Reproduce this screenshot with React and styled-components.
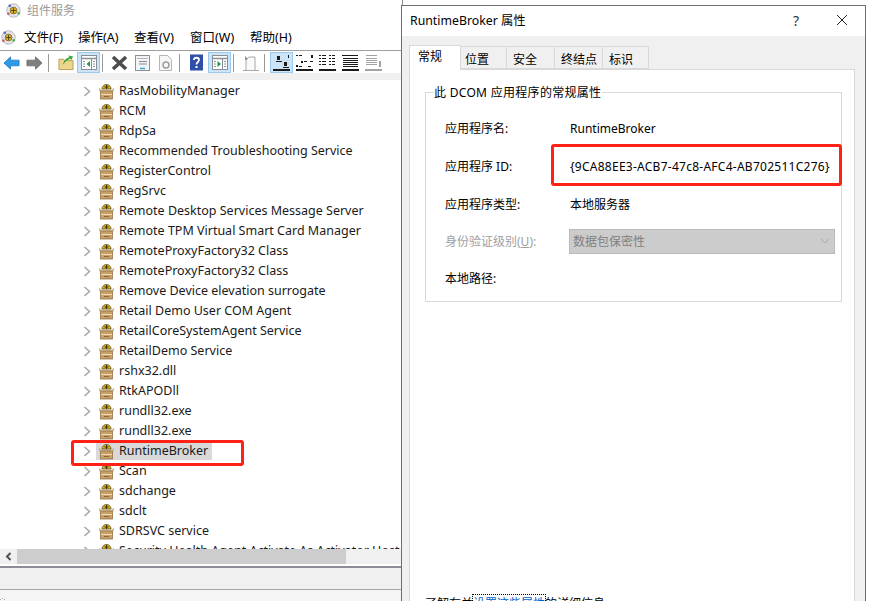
import React from "react";
import styled, { createGlobalStyle } from "styled-components";

const UI_FONT = `"Noto Sans", "Noto Sans CJK SC", sans-serif`;

const services = [
  "RasMobilityManager",
  "RCM",
  "RdpSa",
  "Recommended Troubleshooting Service",
  "RegisterControl",
  "RegSrvc",
  "Remote Desktop Services Message Server",
  "Remote TPM Virtual Smart Card Manager",
  "RemoteProxyFactory32 Class",
  "RemoteProxyFactory32 Class",
  "Remove Device elevation surrogate",
  "Retail Demo User COM Agent",
  "RetailCoreSystemAgent Service",
  "RetailDemo Service",
  "rshx32.dll",
  "RtkAPODll",
  "rundll32.exe",
  "rundll32.exe",
  "RuntimeBroker",
  "Scan",
  "sdchange",
  "sdclt",
  "SDRSVC service",
  "Security Health Agent Activate As Activator Host",
];

const menus = [
  { text: "文件(F)", w: 54 },
  { text: "操作(A)", w: 56 },
  { text: "查看(V)", w: 56 },
  { text: "窗口(W)", w: 60 },
  { text: "帮助(H)", w: 50 },
];

const tabs = [
  { text: "常规", w: 52, pad: 8 },
  { text: "位置", w: 46, pad: 4 },
  { text: "安全", w: 48, pad: 6 },
  { text: "终结点", w: 48, pad: 6 },
  { text: "标识", w: 46, pad: 6 },
];

const GlobalStyle = createGlobalStyle`
  html, body {
    margin: 0;
    height: 100%;
    background: #fff;
    overflow: hidden;
  }
  body {
    font-family: ${UI_FONT};
    font-size: 12.5px;
    color: #000;
  }
`;

const Desktop = styled.div`
  position: relative;
  width: 870px;
  height: 601px;
  overflow: hidden;
  background: #fff;
`;

const MainWindow = styled.div`
  display: flex;
  flex-direction: column;
  width: 402px;
  height: 601px;
  border-right: 1px solid #8a8a8a;
`;

const TitleBar = styled.div`
  display: flex;
  align-items: center;
  gap: 6px;
  box-sizing: border-box;
  height: 23px;
  padding: 0 0 3px 6px;
  font-size: 12px;
  color: #9a9a9a;
`;

const MenuBar = styled.div`
  display: flex;
  align-items: center;
  box-sizing: border-box;
  height: 27px;
  padding: 2px 0 0 1px;
`;

const MenuItem = styled.span`
  width: ${(p) => p.$w}px;
  font-size: 12.5px;
  line-height: 25px;
`;

const Toolbar = styled.div`
  display: flex;
  align-items: center;
  height: 21px;
  padding-top: 1px;
  border-top: 1px solid #a0a0a0;
`;

const ToolButton = styled.span`
  display: flex;
  align-items: center;
  justify-content: center;
  box-sizing: border-box;
  width: 23px;
  height: 21px;
  background: ${(p) => (p.$on ? "#cce4f7" : "transparent")};
  border: 1px solid ${(p) => (p.$on ? "#99c9ef" : "transparent")};
`;

const ToolSep = styled.span`
  width: 1px;
  height: 18px;
  margin: 0 5px 0 2px;
  background: #9a9a9a;
`;

const Band = styled.div`
  height: 7px;
  background: #f0f0f0;
`;

const Tree = styled.div`
  flex: 1;
  min-height: 0;
  overflow: hidden;
  padding-top: 1px;
`;

const Row = styled.div`
  display: flex;
  align-items: center;
  height: 20px;
  padding-left: 83px;
`;

const Chevron = styled.svg`
  flex: none;
  width: 8px;
  height: 11px;
  margin-right: 5px;
`;

const RowBody = styled.span`
  display: flex;
  align-items: center;
  height: 18px;
  padding-left: 3px;
  background: ${(p) => (p.$selected ? "#d9d9d9" : "transparent")};
`;

const Label = styled.span`
  margin-left: 5px;
  padding-right: 4px;
  font-size: 12.5px;
  line-height: 18px;
  white-space: nowrap;
  color: #1a1a1a;
`;

const HScroll = styled.div`
  display: flex;
  flex: none;
  height: 15px;
  margin-bottom: 2px;
  background: #f0f0f0;
`;

const ScrollArrow = styled.span`
  display: flex;
  align-items: center;
  justify-content: center;
  width: 17px;
`;

const HThumb = styled.div`
  width: 329px;
  background: #cdcdcd;
`;

const StatusBar = styled.div`
  flex: none;
  box-sizing: border-box;
  height: 24px;
  background: #f0f0f0;
  border-top: 2px solid #8c8c98;
  border-bottom: 1px solid #a8a8a8;
`;

const FootBand = styled.div`
  flex: none;
  height: 10px;
  padding-top: 1px;
  background: #f5f5f5;
`;

const Dialog = styled.div`
  position: absolute;
  left: 401px;
  top: 5px;
  display: flex;
  flex-direction: column;
  box-sizing: border-box;
  width: 465px;
  height: 600px;
  border: 1px solid #6f6f6f;
  background: #f0f0f0;
`;

const DialogTitle = styled.div`
  display: flex;
  align-items: center;
  justify-content: space-between;
  box-sizing: border-box;
  height: 30px;
  padding: 0 0 2px 8px;
  background: #fff;
  font-size: 12.3px;
`;

const TitleButtons = styled.div`
  display: flex;
  align-items: center;
`;

const HelpMark = styled.span`
  width: 46px;
  padding-left: 1px;
  font-size: 14px;
  text-align: center;
  color: #333;
`;

const CloseButton = styled.span`
  display: flex;
  justify-content: center;
  width: 46px;
`;

const TabStrip = styled.div`
  display: flex;
  align-items: flex-end;
  height: 33px;
  padding-left: 7px;
`;

const Tab = styled.div`
  position: relative;
  z-index: ${(p) => (p.$active ? 1 : 0)};
  box-sizing: border-box;
  width: ${(p) => p.$w}px;
  height: ${(p) => (p.$active ? 25 : 23)}px;
  margin-bottom: ${(p) => (p.$active ? -1 : 0)}px;
  padding: ${(p) => (p.$active ? 0 : 2)}px 0 0 ${(p) => p.$pad}px;
  border: 1px solid #d9d9d9;
  border-left-width: ${(p) => (p.$active ? 1 : 0)}px;
  border-bottom-width: ${(p) => (p.$active ? 0 : 1)}px;
  background: ${(p) => (p.$active ? "#fff" : "#f0f0f0")};
  font-size: 12px;
  line-height: 21px;
`;

const TabPanel = styled.div`
  flex: 1;
  margin: 0 10px 0 7px;
  padding: 14px 12px 0 15px;
  background: #fff;
  border: 1px solid #d9d9d9;
  border-bottom: 0;
`;

const GroupBox = styled.fieldset`
  box-sizing: border-box;
  height: 218px;
  margin: 0;
  padding: 9px 0 0 19px;
  border: 1px solid #d9d9d9;
`;

const GroupTitle = styled.legend`
  margin-left: -11px;
  padding: 2px 1px 0 0;
  font-size: 12px;
  line-height: 14px;
  letter-spacing: 0.3px;
`;

const Field = styled.div`
  display: grid;
  grid-template-columns: 125px auto;
  align-items: center;
  height: ${(p) => p.$h || 38}px;
  font-size: 12px;
  color: ${(p) => (p.$disabled ? "#a0a0a0" : "#000")};
`;

const GuidValue = styled.span`
  letter-spacing: 0.26px;
  white-space: nowrap;
`;

const ComboBox = styled.div`
  display: flex;
  align-items: center;
  justify-content: space-between;
  box-sizing: border-box;
  width: 266px;
  height: 25px;
  margin-left: -1px;
  padding: 0 4px 0 3px;
  background: #cccccc;
  border: 1px solid #bababa;
  color: #808080;
`;

const FootNote = styled.div`
  position: absolute;
  left: 23px;
  top: 591px;
  font-size: 12px;
  line-height: 14px;
  white-space: nowrap;
`;

const HelpLink = styled.span`
  color: #0066cc;
  outline: 1px dotted #000;
`;

const Callout = styled.div`
  position: absolute;
  left: ${(p) => p.$x}px;
  top: ${(p) => p.$y}px;
  box-sizing: border-box;
  width: ${(p) => p.$w}px;
  height: ${(p) => p.$h}px;
  border: 3px solid #ff2116;
  border-radius: 3px;
`;

// component-services package icon used for each tree row
const PackageIcon = () => (
  <svg width="15" height="18" viewBox="0 0 15 18">
    <path d="M3 7a4.5 4.5 0 0 1 9 0z" fill="#e3b520" stroke="#5a4a10" strokeWidth="0.8" />
    <path d="M7.5 3v4M5.5 5h4" stroke="#3b3210" strokeWidth="1" />
    <path d="M0 6.5l3.5 2h8l3.5-2-1 3H1z" fill="#e8d4ae" stroke="#b69a6d" strokeWidth="0.6" />
    <rect x="1.5" y="9" width="12" height="8" fill="#c99f68" stroke="#96734a" strokeWidth="0.8" />
    <path d="M2 12.5h11" stroke="#f0d9b4" strokeWidth="1" />
    <path d="M5 14.5h5" stroke="#8a6538" strokeWidth="1" />
  </svg>
);

const AppIcon = () => (
  <svg width="15" height="15" viewBox="0 0 16 16">
    <circle cx="8" cy="8" r="7.2" fill="#e4e4ea" stroke="#a9a9b4" strokeWidth="0.8" />
    <circle cx="8" cy="8" r="3.6" fill="#e3b520" stroke="#5a4a10" strokeWidth="0.7" />
    <path d="M8 5.5v5M5.5 8h5" stroke="#3b3210" strokeWidth="0.9" />
    <circle cx="4" cy="3" r="1.5" fill="#5a6fc0" />
    <circle cx="13.5" cy="11" r="1.5" fill="#58b058" />
    <circle cx="2.5" cy="11.5" r="1.4" fill="#d05a5a" />
  </svg>
);

const ArrowIcon = ({ left, color, edge }) => (
  <svg width="17" height="16" viewBox="0 0 18 16">
    <path
      d={left ? "M1 8l7-6.5V5h9v6H8v3.5z" : "M17 8l-7-6.5V5H1v6h9v3.5z"}
      fill={color}
      stroke={edge}
      strokeWidth="0.8"
    />
  </svg>
);

const UpFolderIcon = () => (
  <svg width="16" height="17" viewBox="0 0 17 17">
    <path d="M1 5h5l1 1.5h9V16H1z" fill="#ecd58c" stroke="#a78a3e" strokeWidth="0.8" />
    <path d="M5 11c1-4 3-7 7-8l-1-2 5 1-2 4-1-1.500c-3 1-5 3-8 6.500z" fill="#3fa83a" />
  </svg>
);

const PaneIcon = ({ arrow }) => (
  <svg width="16" height="15" viewBox="0 0 16 15">
    <rect x="0.5" y="0.5" width="15" height="14" fill="#fff" stroke="#8a8f96" />
    <path d="M1 3.500h14" stroke="#8a8f96" strokeWidth="1.500" />
    <path d="M10.500 4v10" stroke="#8a8f96" />
    <path d="M12 6.500h2M12 9h2M12 11.500h2M2 6.500h2M2 9h2M2 11.500h2" stroke="#8a8f96" />
    <path d={arrow === "left" ? "M9 6v6L5.500 9z" : "M5.500 6v6L9 9z"} fill="#1e9a4a" />
  </svg>
);

const DeleteIcon = () => (
  <svg width="17" height="16" viewBox="0 0 17 16">
    <path d="M2 2l13 12M15 2L2 14" stroke="#4d4d4d" strokeWidth="3.600" />
  </svg>
);

const PropsIcon = () => (
  <svg width="15" height="16" viewBox="0 0 15 16">
    <rect x="0.500" y="0.500" width="14" height="15" fill="#f4f4f4" stroke="#8f8f8f" />
    <path d="M2 3.500h11" stroke="#b5b5b5" />
    <path d="M4 6.500h8M4 9h8" stroke="#7d8ea0" />
    <path d="M5 13.500h5" stroke="#35a6dc" strokeWidth="1.500" />
  </svg>
);

const RefreshIcon = () => (
  <svg width="13" height="16" viewBox="0 0 13 16">
    <path d="M0.500 0.500h8l4 4v11h-12z" fill="#f6f6f6" stroke="#b5b5b5" />
    <circle cx="7" cy="10" r="3" fill="none" stroke="#9a9a9a" strokeWidth="1.400" />
  </svg>
);

const HelpIcon = () => (
  <svg width="13" height="17" viewBox="0 0 13 16">
    <rect width="13" height="16" fill="#2f4fa8" />
    <path d="M4 5.500c0-3 5-3 5 0 0 2-2.500 2-2.500 4.500" fill="none" stroke="#fff" strokeWidth="1.800" />
    <rect x="5.500" y="11.500" width="2" height="2" fill="#fff" />
  </svg>
);

const ExportIcon = () => (
  <svg width="16" height="16" viewBox="0 0 16 16">
    <path d="M3 15.500V5l3-3h6v13.500" fill="#fafafa" stroke="#a8a8a8" />
    <path d="M0 15.500h16" stroke="#a8a8a8" />
    <path d="M2 1l3 3-3 1z" fill="#8f8f8f" />
  </svg>
);

// the list-view style buttons: small bars and dots over a thick baseline
const ViewIcon = ({ cells, color = "#1a1a1a" }) => (
  <svg width="17" height="16" viewBox="0 0 17 16">
    {cells.map(([x, y, w, h], i) => (
      <rect key={i} x={x} y={y} width={w} height={h} fill={color} />
    ))}
    <rect x="0" y="14" width="17" height="2" fill={color} />
  </svg>
);

const largeIcons = [[4, 1, 3, 4], [3, 6, 6, 1], [11, 7, 3, 4], [10, 12, 6, 1], [15, 0, 1, 3]];
const smallIcons = [[0, 0, 2, 1], [3, 0, 3, 1], [15, 0, 2, 3], [5, 6, 2, 2], [8, 6, 3, 1], [14, 6, 3, 1], [0, 10, 2, 2], [3, 11, 3, 1], [12, 11, 3, 1]];
const listIcons = [[0, 0, 2, 1], [3, 0, 4, 1], [10, 0, 2, 1], [13, 0, 3, 1], [0, 3, 2, 1], [3, 3, 4, 1], [10, 3, 2, 1], [13, 3, 3, 1], [0, 6, 2, 1], [3, 6, 4, 1], [10, 6, 2, 1], [13, 6, 3, 1], [0, 9, 2, 1], [3, 9, 4, 1], [10, 9, 2, 1], [13, 9, 3, 1]];
const detailIcons = [[0, 0, 16, 1], [1, 3, 15, 1], [1, 5, 15, 1], [1, 7, 15, 1], [1, 9, 15, 1], [1, 11, 15, 1]];
const filterIcons = [[1, 0, 11, 1], [1, 3, 11, 1], [1, 5, 11, 1], [1, 7, 11, 1], [1, 9, 11, 1], [14, 6, 2, 6]];

const App = () => (
  <>
    <GlobalStyle />
    <Desktop>
      <MainWindow>
        <TitleBar>
          <AppIcon />
          组件服务
        </TitleBar>
        <MenuBar>
          <AppIcon />
          <MenuItem $w={8} />
          {menus.map((m) => (
            <MenuItem key={m.text} $w={m.w}>
              {m.text}
            </MenuItem>
          ))}
        </MenuBar>
        <Toolbar>
          <ToolButton>
            <ArrowIcon left color="#2f9be8" edge="#1f78c0" />
          </ToolButton>
          <ToolButton>
            <ArrowIcon color="#7f7f7f" edge="#666" />
          </ToolButton>
          <ToolSep />
          <ToolButton>
            <UpFolderIcon />
          </ToolButton>
          <ToolButton $on>
            <PaneIcon arrow="left" />
          </ToolButton>
          <ToolSep />
          <ToolButton>
            <DeleteIcon />
          </ToolButton>
          <ToolButton>
            <PropsIcon />
          </ToolButton>
          <ToolButton>
            <RefreshIcon />
          </ToolButton>
          <ToolSep />
          <ToolButton>
            <HelpIcon />
          </ToolButton>
          <ToolButton $on>
            <PaneIcon arrow="right" />
          </ToolButton>
          <ToolSep />
          <ToolButton>
            <ExportIcon />
          </ToolButton>
          <ToolSep />
          <ToolButton $on>
            <ViewIcon cells={largeIcons} />
          </ToolButton>
          <ToolButton>
            <ViewIcon cells={smallIcons} />
          </ToolButton>
          <ToolButton>
            <ViewIcon cells={listIcons} />
          </ToolButton>
          <ToolButton>
            <ViewIcon cells={detailIcons} />
          </ToolButton>
          <ToolButton>
            <ViewIcon cells={filterIcons} color="#a3a3a3" />
          </ToolButton>
        </Toolbar>
        <Band />
        <Tree>
          {services.map((name, i) => (
            <Row key={i}>
              <Chevron viewBox="0 0 8 11">
                <path d="M1.500 1l5 4.500-5 4.500" fill="none" stroke="#a6a6a6" strokeWidth="1.500" />
              </Chevron>
              <RowBody $selected={name === "RuntimeBroker"}>
                <PackageIcon />
                <Label>{name}</Label>
              </RowBody>
            </Row>
          ))}
        </Tree>
        <HScroll>
          <ScrollArrow>
            <svg width="7" height="9" viewBox="0 0 7 9">
              <path d="M5.500 1L2 4.500 5.500 8" fill="none" stroke="#505050" strokeWidth="2" />
            </svg>
          </ScrollArrow>
          <HThumb />
        </HScroll>
        <StatusBar />
        <FootBand>
          <svg width="6" height="6" viewBox="0 0 6 6">
            <path d="M0 1h1v1H0zM2 0h1v1H2zM4 1h1v1H4zM1 3h1v1H1zM3 3h1v1H3zM2 5h1v1H2z" fill="#a8a8a8" />
          </svg>
        </FootBand>
      </MainWindow>

      <Dialog>
        <DialogTitle>
          RuntimeBroker 属性
          <TitleButtons>
            <HelpMark>?</HelpMark>
            <CloseButton>
              <svg width="12" height="12" viewBox="0 0 12 12">
                <path d="M1 1l10 10M11 1L1 11" stroke="#222" strokeWidth="1" />
              </svg>
            </CloseButton>
          </TitleButtons>
        </DialogTitle>
        <TabStrip>
          {tabs.map((t, i) => (
            <Tab key={t.text} $w={t.w} $pad={t.pad} $active={i === 0}>
              {t.text}
            </Tab>
          ))}
        </TabStrip>
        <TabPanel>
          <GroupBox>
            <GroupTitle>此 DCOM 应用程序的常规属性</GroupTitle>
            <Field>
              <span>应用程序名:</span>
              <span>RuntimeBroker</span>
            </Field>
            <Field>
              <span>应用程序 ID:</span>
              <GuidValue>{"{9CA88EE3-ACB7-47c8-AFC4-AB702511C276}"}</GuidValue>
            </Field>
            <Field>
              <span>应用程序类型:</span>
              <span>本地服务器</span>
            </Field>
            <Field $disabled $h={36}>
              <span>
                身份验证级别(<u>U</u>):
              </span>
              <ComboBox>
                数据包保密性
                <svg width="10" height="6" viewBox="0 0 10 6">
                  <path d="M1 1l4 4 4-4" fill="none" stroke="#a8a8a8" strokeWidth="1" />
                </svg>
              </ComboBox>
            </Field>
            <Field>
              <span>本地路径:</span>
            </Field>
          </GroupBox>
        </TabPanel>
        <FootNote>
          了解有关<HelpLink>设置这些属性</HelpLink>的详细信息。
        </FootNote>
      </Dialog>

      <Callout $x={71} $y={440} $w={173} $h={26} />
      <Callout $x={551} $y={144} $w={291} $h={42} />
    </Desktop>
  </>
);

export default App;
